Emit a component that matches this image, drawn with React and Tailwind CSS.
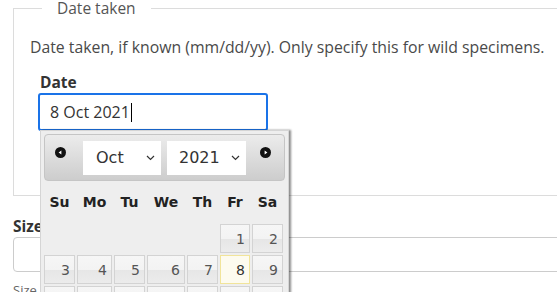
import React from 'react';

const days = ['Su', 'Mo', 'Tu', 'We', 'Th', 'Fr', 'Sa'];
const rows = [
  [null, null, null, null, null, 1, 2],
  [3, 4, 5, 6, 7, 8, 9],
  [10, 11, 12, 13, 14, 15, 16],
];

const Arrow = ({ dir }) => (
  <svg width="11" height="11" viewBox="0 0 11 11">
    <circle cx="5.5" cy="5.5" r="5.5" fill="#111" />
    {dir === 'prev' ? (
      <path d="M3.6 5.5 L6.4 3.4 L6.4 7.6 Z" fill="#fff" />
    ) : (
      <path d="M7.4 5.5 L4.6 3.4 L4.6 7.6 Z" fill="#fff" />
    )}
  </svg>
);

const Chevron = () => (
  <svg width="9" height="6" viewBox="0 0 9 6" fill="none" stroke="#333" strokeWidth="1.2">
    <path d="M1 1 L4.5 4.5 L8 1" />
  </svg>
);

const App = () => {
  return (
    <div className="relative w-[557px] h-[292px] overflow-hidden bg-white font-['Open_Sans',sans-serif] text-[#4a4a4a]">
      {/* Fieldset */}
      <fieldset className="ml-[13px] w-[600px] h-[196px] border border-[#dcdcdc] pl-4 pt-0">
        <legend className="ml-[12px] px-[15px] text-[15.5px] leading-[16px] text-[#555]">Date taken</legend>
        <p className="mt-[21px] text-[15.8px] leading-[20px] text-[#4a4a4a]">
          Date taken, if known (mm/dd/yy). Only specify this for wild specimens.
        </p>
        <label className="block mt-[15px] ml-[10px] text-[15.5px] leading-[20px] font-bold text-[#333]">Date</label>
        <div className="mt-[1px] ml-[8px] w-[230px] h-[38px] rounded-[3px] border-2 border-[#1a73e8] flex items-center pl-[10px] text-[16px] text-[#333]">
          8 Oct 2021<span className="inline-block w-px h-[19px] bg-black ml-px" />
        </div>
      </fieldset>

      {/* Size field behind picker */}
      <div className="ml-[13px] mt-[20px] text-[15.5px] leading-[20px] font-bold text-[#333]">Size</div>
      <div className="ml-[13px] mt-[1px] w-[600px] h-[35px] rounded-[4px] border border-[#ccc]" />
      <div className="ml-[13px] mt-[10px] text-[13px] leading-[16px] text-[#666]">Size</div>

      {/* Datepicker */}
      <div className="absolute left-[40px] top-[130px] w-[249px] h-[180px] bg-[#eeeeee] border border-[#d5d5d5] shadow-[2px_0_2px_rgba(0,0,0,0.45)] p-[3px] font-['DejaVu_Sans',Verdana,sans-serif] text-[#454545]">
        <div className="h-[47px] rounded-[4px] border border-[#c5c5c5] bg-gradient-to-b from-[#ececec] to-[#cdcdcd] flex items-center pl-[10px] pr-[13px]">
          <div className="-mt-[10px]"><Arrow dir="prev" /></div>
          <div className="ml-[17px] w-[78px] h-[34px] bg-white flex items-center justify-between pl-[13px] pr-[6px] text-[16px] text-[#333]">
            Oct <Chevron />
          </div>
          <div className="ml-[6px] w-[79px] h-[34px] bg-white flex items-center justify-between pl-[12px] pr-[6px] text-[16px] text-[#333]">
            2021 <Chevron />
          </div>
          <div className="ml-auto -mt-[10px]"><Arrow dir="next" /></div>
        </div>
        <div className="grid grid-cols-[31px_35px_31px_38px_31px_30px_31px] gap-x-[2px] mt-[9px] h-[24px] items-center text-[14px] font-bold text-[#222]">
          {days.map((d) => (
            <div key={d} className="text-center">{d}</div>
          ))}
        </div>
        <div className="grid grid-cols-[31px_35px_31px_38px_31px_30px_31px] gap-[2px] mt-[10px]">
          {rows.flat().map((n, i) =>
            n === null ? (
              <div key={i} className="h-[29px]" />
            ) : (
              <div
                key={i}
                className={
                  n === 8
                    ? 'h-[29px] border border-[#f1e49a] bg-[#fdfbef] text-right pr-[4px] pt-[5px] text-[14px] leading-[18px] text-[#333]'
                    : 'h-[29px] border border-[#d3d3d3] bg-[linear-gradient(#f6f6f6_0%,#f3f3f3_50%,#e6e6e6_51%,#ececec_100%)] text-right pr-[4px] pt-[5px] text-[14px] leading-[18px] text-[#555]'
                }
              >
                {n}
              </div>
            )
          )}
        </div>
      </div>
    </div>
  );
};

export default App;
